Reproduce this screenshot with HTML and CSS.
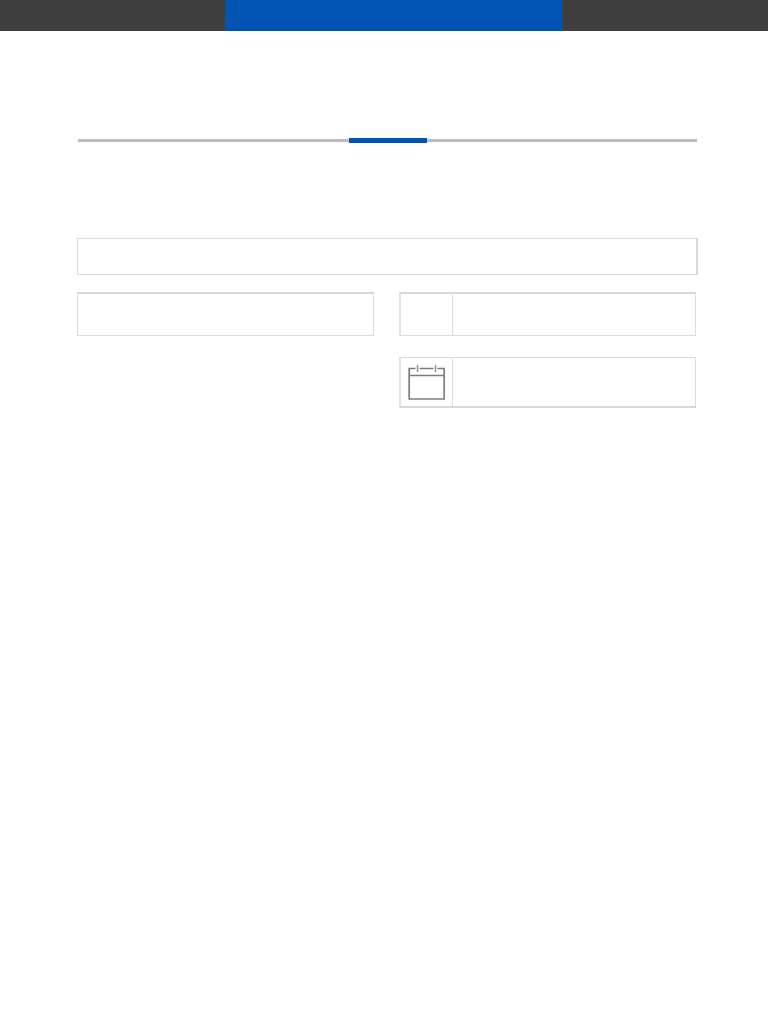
FILE: index.html
```html
<!DOCTYPE html>
<html lang="en">
<head>
<meta charset="utf-8">
<title>Form</title>
<link rel="stylesheet" href="styles.css">
</head>
<body>
<header class="topbar">
  <div class="topbar-side topbar-left"></div>
  <div class="topbar-active"></div>
  <div class="topbar-side topbar-right"></div>
</header>
<main class="content">
  <div class="rule">
    <div class="rule-line rule-before"></div>
    <div class="rule-accent"></div>
    <div class="rule-line rule-after"></div>
  </div>
  <div class="field field-wide"></div>
  <div class="columns">
    <div class="field field-left"></div>
    <div class="stack">
      <div class="field field-icon field-short">
        <div class="icon-cell"></div>
        <div class="value-cell"></div>
      </div>
      <div class="field field-icon field-tall">
        <div class="icon-cell">
          <svg class="calendar" width="37" height="36" viewBox="0 0 37 36" fill="none" stroke="#7c7c7c">
            <path d="M7.5 4.5H1.2V35H36.2V4.5H29.5M11.5 4.5H25.5" stroke-width="1.7"/>
            <path d="M1.2 11.5H36.2" stroke-width="1.5"/>
            <path d="M9.5 1V8M27.5 1V8" stroke-width="1.4" stroke="#8c8c8c"/>
          </svg>
        </div>
        <div class="value-cell"></div>
      </div>
    </div>
  </div>
</main>
</body>
</html>
```
FILE: styles.css
```css
html, body {
  margin: 0;
  padding: 0;
  background: #fff;
  font-family: "Liberation Sans", Arial, sans-serif;
}
.topbar {
  display: flex;
  height: 31px;
  background: #3f3f3f;
}
.topbar-left { width: 225px; }
.topbar-active { width: 337px; background: #0054b4; }
.topbar-right { flex: 1; }
.content {
  padding: 107px 70px 0 77px;
}
.rule {
  display: flex;
  align-items: center;
  height: 5px;
  margin-left: 1px;
  margin-right: 1px;
}
.rule-line { height: 3px; background: #bcbcbc; }
.rule-before { width: 271px; }
.rule-accent { width: 78px; height: 5px; background: #0054b4; }
.rule-after { flex: 1; }
.field {
  box-sizing: border-box;
  border: 1px solid #dcdcdc;
  background: #fff;
}
.field-wide {
  height: 37px;
  margin-top: 95px;
  border-right: 2px solid #d8d8d8;
}
.columns {
  display: flex;
  align-items: flex-start;
  margin-top: 17px;
}
.field-left {
  width: 297px;
  height: 44px;
  border-top: 2px solid #d8d8d8;
}
.stack {
  width: 297px;
  margin-left: 25px;
  display: flex;
  flex-direction: column;
  gap: 21px;
}
.field-icon { display: flex; border-left: 2px solid #e2e2e2; }
.field-short { height: 44px; border-top: 2px solid #d8d8d8; }
.field-tall { height: 51px; border-bottom: 2px solid #d8d8d8; }
.icon-cell {
  box-sizing: border-box;
  width: 52px;
  border-right: 1px solid #dcdcdc;
  display: flex;
  align-items: center;
  justify-content: center;
}
.value-cell { flex: 1; }
.calendar { display: block; }
```
